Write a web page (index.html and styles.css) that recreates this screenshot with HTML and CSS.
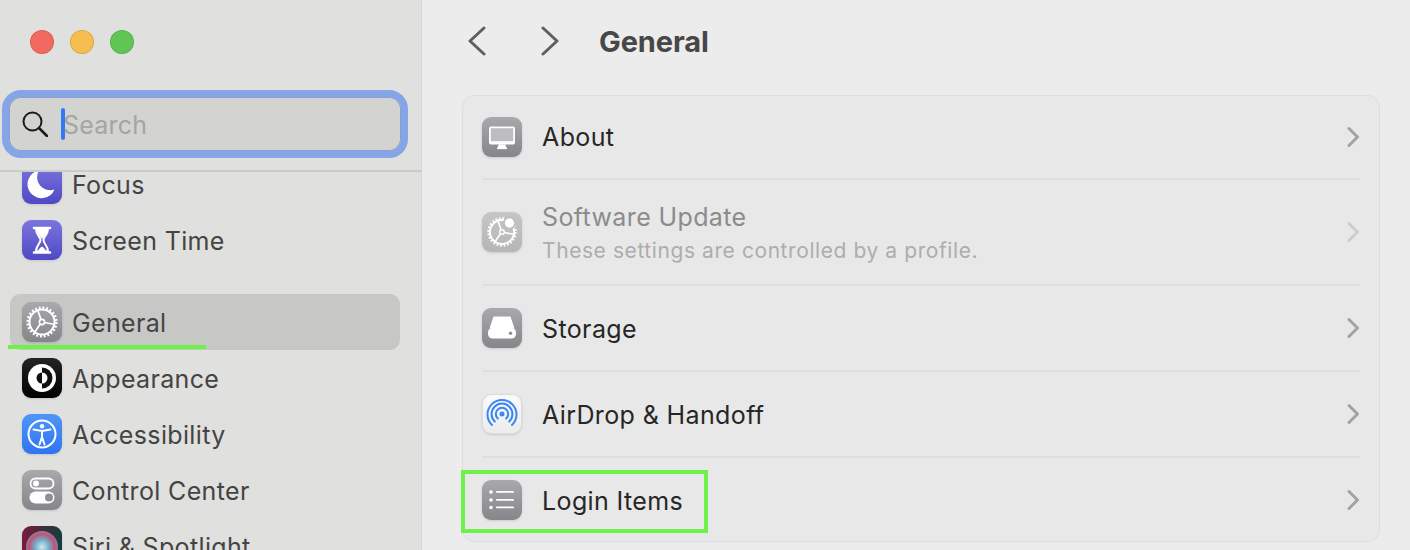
FILE: index.html
```html
<!DOCTYPE html>
<html lang="en">
<head>
<meta charset="utf-8">
<title>System Settings - General</title>
<link rel="stylesheet" href="styles.css">
</head>
<body>
<svg class="defs" width="0" height="0" aria-hidden="true">
  <defs>
    <linearGradient id="g-gray" x1="0" y1="0" x2="0" y2="1"><stop offset="0" stop-color="#a9a9ad"/><stop offset="1" stop-color="#86868a"/></linearGradient>
    <linearGradient id="g-gray-dim" x1="0" y1="0" x2="0" y2="1"><stop offset="0" stop-color="#c6c6c8"/><stop offset="1" stop-color="#b6b6b8"/></linearGradient>
    <linearGradient id="g-purple" x1="0" y1="0" x2="0" y2="1"><stop offset="0" stop-color="#7b74de"/><stop offset="1" stop-color="#4f49c4"/></linearGradient>
    <linearGradient id="g-blue" x1="0" y1="0" x2="0" y2="1"><stop offset="0" stop-color="#4f96f8"/><stop offset="1" stop-color="#2f74f2"/></linearGradient>
    <linearGradient id="g-black" x1="0" y1="0" x2="0" y2="1"><stop offset="0" stop-color="#242424"/><stop offset="1" stop-color="#000"/></linearGradient>
    <linearGradient id="g-white" x1="0" y1="0" x2="0" y2="1"><stop offset="0" stop-color="#fafafa"/><stop offset="1" stop-color="#ececec"/></linearGradient>
    <linearGradient id="g-siri" x1="0" y1="0" x2="1" y2="0"><stop offset="0" stop-color="#7a1a3c"/><stop offset="1" stop-color="#123d3d"/></linearGradient>
    <radialGradient id="g-orb" cx="0.5" cy="0.5" r="0.5"><stop offset="0" stop-color="#d8e6f2"/><stop offset="0.45" stop-color="#6fb0c8"/><stop offset="0.8" stop-color="#c0527a"/><stop offset="1" stop-color="#8f7f96"/></radialGradient>
  </defs>
</svg>
<div class="window">
  <aside class="sidebar">
    <div class="traffic">
      <span class="light red"></span>
      <span class="light yellow"></span>
      <span class="light green"></span>
    </div>
    <div class="search-wrap">
      <div class="search">
        <svg class="search-icon" width="26" height="26" viewBox="0 0 26 26"><circle cx="10.5" cy="10.5" r="9" fill="none" stroke="#1c1c1c" stroke-width="2"/><path d="M17 17l8 8" stroke="#1c1c1c" stroke-width="2.6" stroke-linecap="round"/></svg>
        <span class="caret"></span>
        <span class="placeholder">Search</span>
      </div>
    </div>
    <nav class="nav">
      <div class="nav-row nav-first">
        <svg class="icon" viewBox="0 0 40 40"><rect width="40" height="40" rx="9" fill="url(#g-purple)"/><path d="M17 6.5A14 14 0 1 0 32.500 25.500 13 13 0 0 1 17 6.500z" fill="#fff"/></svg>
        <span class="nav-label">Focus</span>
      </div>
      <div class="nav-row nav-group-end">
        <svg class="icon" viewBox="0 0 40 40"><rect width="40" height="40" rx="9" fill="url(#g-purple)"/><path d="M12 8h16M12 32.500h16" stroke="#fff" stroke-width="2.600" stroke-linecap="round"/><path d="M14 9c0 6 4.500 7.500 4.500 11S14 25.500 14 31.500h12c0-6-4.500-7.500-4.500-11.500S26 15 26 9z" fill="none" stroke="#fff" stroke-width="2"/><path d="M14.500 9.500h11c-.5 4.500-4 6.500-5.500 9.500-1.500-3-5-5-5.500-9.500zM16 31c1-2.500 2.500-3.500 4-4.500 1.500 1 3 2 4 4.500z" fill="#fff"/></svg>
        <span class="nav-label">Screen Time</span>
      </div>
      <div class="nav-row selected">
        <svg class="icon" viewBox="0 0 40 40"><rect width="40" height="40" rx="9" fill="url(#g-gray)"/><circle cx="20" cy="20" r="12.500" fill="none" stroke="#fff" stroke-width="2"/><circle cx="20" cy="20" r="14.300" fill="none" stroke="#fff" stroke-width="2.600" stroke-dasharray="1.900 1.844"/><circle cx="20" cy="20" r="2.600" fill="none" stroke="#fff" stroke-width="1.600"/><path d="M22.500 20.500 33 22.500M18.300 22 12.500 30.500M19 17.600 15.500 7.500" stroke="#fff" stroke-width="1.700"/></svg>
        <span class="nav-label">General</span>
      </div>
      <div class="nav-row">
        <svg class="icon" viewBox="0 0 40 40"><rect width="40" height="40" rx="9" fill="url(#g-black)"/><circle cx="20" cy="20" r="14" fill="#fff"/><path d="M20 9.500a10.500 10.500 0 0 1 0 21z" fill="#111"/><circle cx="20" cy="20" r="5.500" fill="#111"/><path d="M20 14.500a5.500 5.500 0 0 1 0 11z" fill="#fff"/></svg>
        <span class="nav-label">Appearance</span>
      </div>
      <div class="nav-row">
        <svg class="icon" viewBox="0 0 40 40"><rect width="40" height="40" rx="9" fill="url(#g-blue)"/><circle cx="20" cy="20" r="13.500" fill="none" stroke="#fff" stroke-width="2"/><circle cx="20" cy="12.300" r="2.200" fill="#fff"/><path d="M11.500 15.500 20 17l8.500-1.500M20 17v6M20 23l-2.500 7.500M20 23l2.500 7.500" fill="none" stroke="#fff" stroke-width="2" stroke-linecap="round"/></svg>
        <span class="nav-label">Accessibility</span>
      </div>
      <div class="nav-row">
        <svg class="icon" viewBox="0 0 40 40"><rect width="40" height="40" rx="9" fill="url(#g-gray)"/><rect x="8.500" y="8.500" width="23" height="10" rx="5" fill="none" stroke="#fff" stroke-width="1.800"/><circle cx="14" cy="13.500" r="3" fill="#fff"/><rect x="7.500" y="21.500" width="25" height="12" rx="6" fill="#fff"/><circle cx="27" cy="27.500" r="4" fill="#8f8f93"/></svg>
        <span class="nav-label">Control Center</span>
      </div>
      <div class="nav-row">
        <svg class="icon" viewBox="0 0 40 40"><rect width="40" height="40" rx="9" fill="url(#g-siri)"/><circle cx="20" cy="21" r="16" fill="url(#g-orb)"/></svg>
        <span class="nav-label">Siri &amp; Spotlight</span>
      </div>
    </nav>
    <span class="mark-underline"></span>
  </aside>
  <main class="content">
    <header class="toolbar">
      <svg class="nav-arrow" width="20" height="30" viewBox="0 0 20 30"><path d="M17 2 3 15l14 13" fill="none" stroke="#5f5f5f" stroke-width="3" stroke-linecap="round" stroke-linejoin="round"/></svg>
      <svg class="nav-arrow" width="20" height="30" viewBox="0 0 20 30"><path d="M3 2l14 13L3 28" fill="none" stroke="#5f5f5f" stroke-width="3" stroke-linecap="round" stroke-linejoin="round"/></svg>
      <h1 class="title">General</h1>
    </header>
    <section class="panel">
      <div class="row">
        <svg class="icon" viewBox="0 0 40 40"><rect width="40" height="40" rx="9" fill="url(#g-gray)"/><rect x="7" y="9.500" width="26" height="18" rx="2" fill="#fff"/><rect x="8.800" y="11.200" width="22.400" height="13" fill="#bdbdbf"/><path d="M16.500 27.500h7l.8 3.500h-8.600z" fill="#fff"/><rect x="15" y="30.500" width="10" height="1.600" fill="#fff"/></svg>
        <span class="row-label">About</span>
        <svg class="chevron" width="14" height="22" viewBox="0 0 14 22"><path d="M2 2.500l8.500 8.500L2 19.500" fill="none" stroke="#a2a2a2" stroke-width="3" stroke-linecap="round" stroke-linejoin="round"/></svg>
      </div>
      <div class="row row-tall disabled">
        <svg class="icon" viewBox="0 0 40 40"><rect width="40" height="40" rx="9" fill="url(#g-gray-dim)"/><circle cx="20" cy="20" r="12" fill="none" stroke="#fff" stroke-width="1.800"/><circle cx="20" cy="20" r="13.500" fill="none" stroke="#fff" stroke-width="2.400" stroke-dasharray="1.800 1.734"/><circle cx="20" cy="20" r="2.300" fill="none" stroke="#fff" stroke-width="1.500"/><path d="M22 20.500 33 22.500M18.300 22 12.500 30.500M19 17.600 15.500 7.500" stroke="#fff" stroke-width="1.600"/><circle cx="27.500" cy="11" r="6.500" fill="#bcbcbe"/><circle cx="27.500" cy="11" r="4.700" fill="#fff"/></svg>
        <div class="row-text">
          <span class="row-label">Software Update</span>
          <span class="row-sub">These settings are controlled by a profile.</span>
        </div>
        <svg class="chevron" width="14" height="22" viewBox="0 0 14 22"><path d="M2 2.500l8.500 8.500L2 19.500" fill="none" stroke="#cdcdcd" stroke-width="3" stroke-linecap="round" stroke-linejoin="round"/></svg>
      </div>
      <div class="row">
        <svg class="icon" viewBox="0 0 40 40"><rect width="40" height="40" rx="9" fill="url(#g-gray)"/><path d="M11.500 8.500h17l4 12h-25z" fill="#fff"/><rect x="6" y="20" width="28" height="10.500" rx="4.500" fill="#fff"/><circle cx="28.500" cy="25.200" r="1.700" fill="#8f8f93"/></svg>
        <span class="row-label">Storage</span>
        <svg class="chevron" width="14" height="22" viewBox="0 0 14 22"><path d="M2 2.500l8.500 8.500L2 19.500" fill="none" stroke="#a2a2a2" stroke-width="3" stroke-linecap="round" stroke-linejoin="round"/></svg>
      </div>
      <div class="row">
        <svg class="icon" viewBox="0 0 40 40"><rect x=".5" y=".5" width="39" height="39" rx="9" fill="url(#g-white)" stroke="#dcdcdc"/><circle cx="20" cy="20" r="2.500" fill="#3a86f5"/><g fill="none" stroke="#3a86f5" stroke-width="2" stroke-linecap="round"><path d="M15.800 24.500a6.200 6.200 0 1 1 8.400 0"/><path d="M12.800 27.500a10.400 10.400 0 1 1 14.400 0"/><path d="M10 31a14.500 14.500 0 1 1 20 0"/></g></svg>
        <span class="row-label">AirDrop &amp; Handoff</span>
        <svg class="chevron" width="14" height="22" viewBox="0 0 14 22"><path d="M2 2.500l8.500 8.500L2 19.500" fill="none" stroke="#a2a2a2" stroke-width="3" stroke-linecap="round" stroke-linejoin="round"/></svg>
      </div>
      <div class="row row-last">
        <svg class="icon" viewBox="0 0 40 40"><rect width="40" height="40" rx="9" fill="url(#g-gray)"/><g fill="#fff"><circle cx="9" cy="12" r="1.800"/><circle cx="9" cy="20" r="1.800"/><circle cx="9" cy="27.500" r="1.800"/><rect x="14" y="11" width="18" height="1.800" rx=".9"/><rect x="14" y="19" width="18" height="1.800" rx=".9"/><rect x="14" y="26.500" width="18" height="1.800" rx=".9"/></g></svg>
        <span class="row-label">Login Items</span>
        <svg class="chevron" width="14" height="22" viewBox="0 0 14 22"><path d="M2 2.500l8.500 8.500L2 19.500" fill="none" stroke="#a2a2a2" stroke-width="3" stroke-linecap="round" stroke-linejoin="round"/></svg>
      </div>
    </section>
  </main>
  <span class="mark-box"></span>
</div>
</body>
</html>
```
FILE: styles.css
```css
* { box-sizing: border-box; }
html, body { margin: 0; height: 100%; overflow: hidden; }
body { font-family: Inter, "Liberation Sans", sans-serif; }
.defs { position: absolute; }

.window { position: relative; display: flex; width: 1410px; height: 550px; background: #ececec; overflow: hidden; }

.sidebar { position: relative; display: flex; flex-direction: column; width: 422px; flex: none; background: #e0e0de; border-right: 1px solid #d6d6d4; }

.traffic { display: flex; gap: 16px; padding: 30px 0 0 30px; height: 90px; }
.light { width: 24px; height: 24px; border-radius: 50%; border: 1px solid rgba(0,0,0,.1); }
.red { background: #f1695f; }
.yellow { background: #f6bd4f; }
.green { background: #61c554; }

.search-wrap { padding: 0 13px 0 2px; height: 82px; border-bottom: 2px solid #cbcbc9; margin-right: -1px; }
.search { display: flex; align-items: center; height: 68px; width: 406px; padding-left: 13px; background: #d3d3d1; border: 7px solid #85a5e6; border-radius: 19px; box-shadow: inset 0 0 0 1px #8a9fd0; }
.search-icon { flex: none; }
.caret { flex: none; width: 4px; height: 32px; margin-left: 13px; border-radius: 2px; background: #3478f6; }
.placeholder { margin-left: -2px; padding-top: 2px; font-size: 25px; letter-spacing: .2px; color: #a5a5a3; }

.nav { flex: 1; overflow: hidden; padding: 0 21px 0 10px; }
.nav-row { display: flex; align-items: center; gap: 10px; height: 56px; padding-left: 12px; border-radius: 10px; }
.nav-first { margin-top: -16px; }
.nav-group-end { margin-bottom: 26px; }
.selected { background: #c7c7c6; }
.nav-label { padding-top: 2px; font-size: 25px; letter-spacing: .35px; color: #444; white-space: nowrap; }
.icon { flex: none; width: 40px; height: 40px; filter: drop-shadow(0 1px 1px rgba(0,0,0,.12)); }

.mark-underline { position: absolute; left: 8px; top: 345px; width: 198px; height: 4px; background: #6ef24a; }
.mark-box { position: absolute; left: 461px; top: 470px; width: 247px; height: 63px; border: 4px solid #6ef24a; }

.content { flex: 1; display: flex; flex-direction: column; padding-left: 40px; padding-right: 30px; }
.toolbar { display: flex; align-items: center; height: 82px; padding-left: 5px; margin-bottom: 13px; }
.nav-arrow { flex: none; margin-right: 53px; }
.nav-arrow + .nav-arrow { margin-right: 39px; }
.title { margin: 0; font-size: 29px; font-weight: 700; letter-spacing: -.1px; color: #474747; }

.panel { display: flex; flex-direction: column; width: 918px; height: 447px; padding: 0 19px; background: #e8e8e8; border: 1px solid #dedede; border-radius: 12px; }
.row { display: flex; align-items: center; gap: 20px; flex: none; height: 86px; border-bottom: 2px solid #dfdfdf; }
.row:first-child { height: 84px; }
.row-tall { height: 106px; }
.row-last { height: 83px; border-bottom: 0; }
.row-label { padding-top: 2px; font-size: 25px; letter-spacing: .38px; color: #262626; white-space: nowrap; }
.row:first-child .row-label { padding-top: 0; }
.row-text { display: flex; flex-direction: column; gap: 6px; }
.disabled .row-label { padding-top: 0; color: #8c8c8c; }
.row-sub { font-size: 21px; letter-spacing: .58px; color: #adadad; white-space: nowrap; }
.chevron { flex: none; margin-left: auto; margin-right: -1px; }
```
